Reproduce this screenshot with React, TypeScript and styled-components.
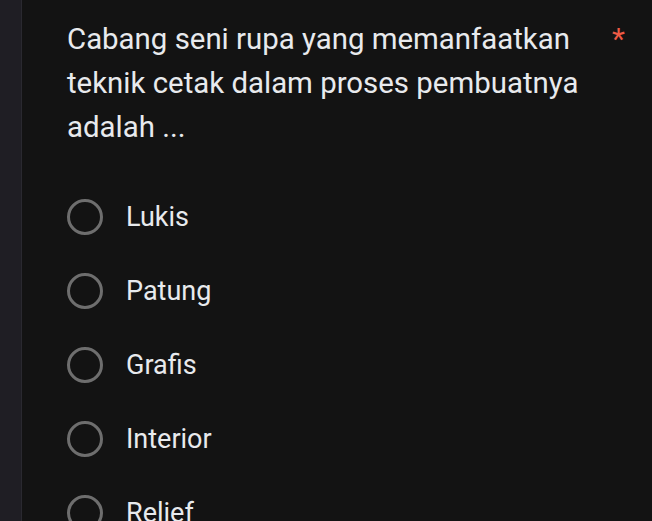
import styled, { createGlobalStyle } from 'styled-components';

const GlobalStyle = createGlobalStyle`
  html, body {
    margin: 0;
    padding: 0;
    background: #131313;
    font-family: Roboto, "Noto Sans", sans-serif;
    overflow: hidden;
  }
`;

const Page = styled.div`
  display: flex;
  height: 521px;
  overflow: hidden;
  background: #131313;
`;

const Sidebar = styled.div`
  width: 21px;
  flex-shrink: 0;
  background: #1f1e24;
  border-right: 1px solid #2a2930;
`;

const Main = styled.div`
  flex: 1;
  padding: 17px 0 0 45px;
`;

const Header = styled.div`
  display: flex;
  align-items: flex-start;
`;

const Question = styled.div`
  width: 540px;
  font-size: 29.4px;
  line-height: 44px;
  color: #e8eaed;
`;

const Required = styled.span`
  margin-left: 5px;
  color: #ee5a45;
  font-size: 30px;
  line-height: 44px;
`;

const Options = styled.div`
  display: flex;
  flex-direction: column;
  margin-top: 31px;
`;

const Option = styled.label`
  display: flex;
  align-items: center;
  height: 74px;
  gap: 23px;
  cursor: pointer;
`;

const Radio = styled.span`
  width: 36px;
  height: 36px;
  box-sizing: border-box;
  border: 3px solid #6e6e6e;
  border-radius: 50%;
  flex-shrink: 0;
`;

const Label = styled.span`
  font-size: 27px;
  color: #e8eaed;
`;

const options = ['Lukis', 'Patung', 'Grafis', 'Interior', 'Relief'];

export default function App() {
  return (
    <Page>
      <GlobalStyle />
      <Sidebar />
      <Main>
        <Header>
          <Question>Cabang seni rupa yang memanfaatkan teknik cetak dalam proses pembuatnya adalah ...</Question>
          <Required>*</Required>
        </Header>
        <Options>
          {options.map((o) => (
            <Option key={o}>
              <Radio />
              <Label>{o}</Label>
            </Option>
          ))}
        </Options>
      </Main>
    </Page>
  );
}
